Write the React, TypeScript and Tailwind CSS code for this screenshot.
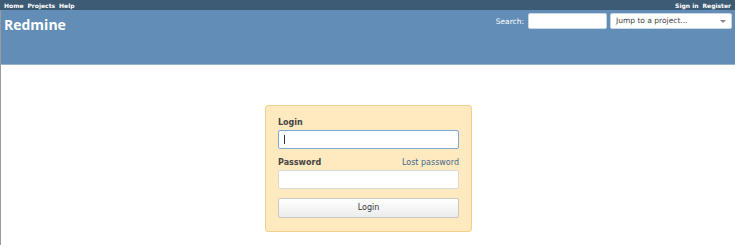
export default function App() {
  return (
    <div
      className="min-h-screen bg-white text-[#333]"
      style={{ fontFamily: '"DejaVu Sans", Verdana, sans-serif' }}
    >
      {/* top menu */}
      <div className="flex h-[10px] items-center justify-between bg-[#3e5b76] px-[4px] text-[6px] font-bold text-white">
        <div className="flex gap-[4px]">
          <span>Home</span>
          <span>Projects</span>
          <span>Help</span>
        </div>
        <div className="flex gap-[4px]">
          <span>Sign in</span>
          <span>Register</span>
        </div>
      </div>

      <div className="border-l border-[#9a9a9a]">
        {/* header */}
        <div className="flex h-[55px] justify-between border-b border-[#95b3d2] bg-[#628db6] pl-[3px] pr-[3px]">
          <h1
            className="pt-[4px] text-[14px] font-bold leading-[21px] text-white"
            style={{ fontFamily: '"Open Sans", "Noto Sans", sans-serif' }}
          >
            Redmine
          </h1>
          <div className="flex items-start gap-[3px] pt-[3px]">
            <span className="mr-[1px] pt-[3px] text-[7.5px] text-white">Search:</span>
            <div className="h-[16px] w-[79px] rounded-[2px] border border-[#c9d6e3] bg-white" />
            <div className="flex h-[16px] w-[122px] items-center justify-between rounded-[2px] border border-[#c9d6e3] bg-white pl-[5px] pr-[5px] text-[7.5px] text-[#444]">
              <span>Jump to a project...</span>
              <span className="h-0 w-0 border-x-[3px] border-t-[3px] border-x-transparent border-t-[#888]" />
            </div>
          </div>
        </div>

        {/* main */}
        <div className="flex justify-center pt-[40px] pb-[13px]">
          <div className="ml-[1px] w-[207px] rounded-[3px] border border-[#f5d08a] bg-[#ffe9be] px-[12px] pt-[12px] pb-[13px]">
            <div className="text-[8px] font-bold leading-[10px] text-[#444]">Login</div>
            <div className="mt-[2px] flex h-[19px] items-center rounded-[2px] border border-[#7fa9d6] bg-white px-[5px]">
              <span className="h-[9px] w-px bg-[#333]" />
            </div>
            <div className="mt-[9px] flex justify-between text-[8px] leading-[10px]">
              <span className="font-bold text-[#444]">Password</span>
              <span className="text-[#3d6a91]">Lost password</span>
            </div>
            <div className="mt-[2px] h-[19px] rounded-[2px] border border-[#d9d9d9] bg-white" />
            <div className="mt-[9px] flex h-[20px] items-center justify-center rounded-[2px] border border-[#c8c8c8] bg-gradient-to-b from-white to-[#ececec] text-[8px] text-[#333]">
              Login
            </div>
          </div>
        </div>
      </div>
    </div>
  );
}
